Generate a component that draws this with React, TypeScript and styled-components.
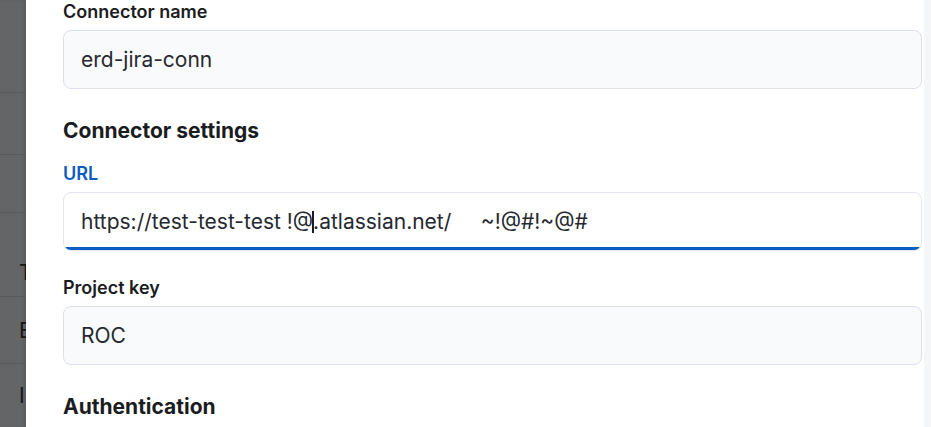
import React from "react";
import styled, { createGlobalStyle } from "styled-components";

const GlobalStyle = createGlobalStyle`
  html, body {
    margin: 0;
    padding: 0;
    background: #ffffff;
    overflow: hidden;
  }

  body {
    font-family: Inter, "Noto Sans", "Liberation Sans", sans-serif;
    -webkit-font-smoothing: antialiased;
  }
`;

const Shell = styled.div`
  display: flex;
  width: 100vw;
  height: 427px;
  overflow: hidden;
`;

const Backdrop = styled.aside`
  width: 26px;
  flex-shrink: 0;
  display: flex;
  flex-direction: column;
  background: #646566;
  box-shadow: inset -3px 0 3px rgba(0, 0, 0, 0.08);
`;

const BackdropRow = styled.div<{ $height?: number; $pad?: number }>`
  height: ${(p) => (p.$height ? `${p.$height}px` : "auto")};
  flex: ${(p) => (p.$height ? "0 0 auto" : "1")};
  box-sizing: border-box;
  padding: ${(p) => p.$pad ?? 0}px 0 0 19px;
  border-bottom: 1.5px solid #58595b;
  overflow: hidden;
  white-space: nowrap;
  font-size: 21px;
  line-height: 28px;
  color: #161616;

  &:last-child {
    border-bottom: none;
  }
`;

const Flyout = styled.main`
  flex: 1;
  display: flex;
  background: #ffffff;
`;

const Content = styled.div`
  flex: 1;
  display: flex;
  flex-direction: column;
  padding: 0 0 0 37px;
`;

const ScrollTrack = styled.div`
  width: 7px;
  margin-left: 2px;
  flex-shrink: 0;
  background: #f5f6f8;
`;

const FormRow = styled.div<{ $gap?: number }>`
  display: flex;
  flex-direction: column;
  gap: 6px;
  margin-top: ${(p) => p.$gap ?? 0}px;
`;

const Label = styled.label<{ $active?: boolean }>`
  font-size: 18px;
  line-height: 24px;
  font-weight: 600;
  color: ${(p) => (p.$active ? "#0b5cc2" : "#1a1c21")};
`;

const SectionTitle = styled.h2`
  margin: 28px 0 17px;
  font-size: 21px;
  line-height: 28px;
  font-weight: 700;
  color: #1a1c21;
`;

const Field = styled.div<{ $focused?: boolean }>`
  height: 59px;
  box-sizing: border-box;
  display: flex;
  align-items: center;
  padding: 0 17px;
  border: 1px solid ${(p) => (p.$focused ? "#e3e5ee" : "#dcdfec")};
  border-radius: 8px;
  background-color: ${(p) => (p.$focused ? "#ffffff" : "#f9fafc")};
  background-image: ${(p) =>
    p.$focused ? "linear-gradient(#0b5cc2, #0b5cc2)" : "none"};
  background-repeat: no-repeat;
  background-position: bottom;
  background-size: 100% 3px;
  font-size: 21px;
  line-height: 28px;
  color: #25282f;
  white-space: pre;
  overflow: hidden;
`;

const Caret = styled.span`
  display: inline-block;
  width: 1.5px;
  height: 22px;
  margin: 0 -0.75px;
  vertical-align: -4px;
  background: #1a1c21;
`;

export default function App() {
  return (
    <>
      <GlobalStyle />
      <Shell>
        <Backdrop>
          <BackdropRow $height={93} />
          <BackdropRow $height={62} />
          <BackdropRow $height={58} />
          <BackdropRow $height={84} $pad={46}>
            T
          </BackdropRow>
          <BackdropRow $height={67} $pad={20}>
            E
          </BackdropRow>
          <BackdropRow $pad={18}>I</BackdropRow>
        </Backdrop>
        <Flyout>
          <Content>
            <FormRow>
              <Label>Connector name</Label>
              <Field>erd-jira-conn</Field>
            </FormRow>

            <SectionTitle>Connector settings</SectionTitle>

            <FormRow>
              <Label $active>URL</Label>
              <Field $focused>
                {"https://test-test-test !@"}
                <Caret />
                {".atlassian.net/     ~!@#!~@#"}
              </Field>
            </FormRow>

            <FormRow $gap={25}>
              <Label>Project key</Label>
              <Field>ROC</Field>
            </FormRow>

            <SectionTitle>Authentication</SectionTitle>
          </Content>
          <ScrollTrack />
        </Flyout>
      </Shell>
    </>
  );
}
